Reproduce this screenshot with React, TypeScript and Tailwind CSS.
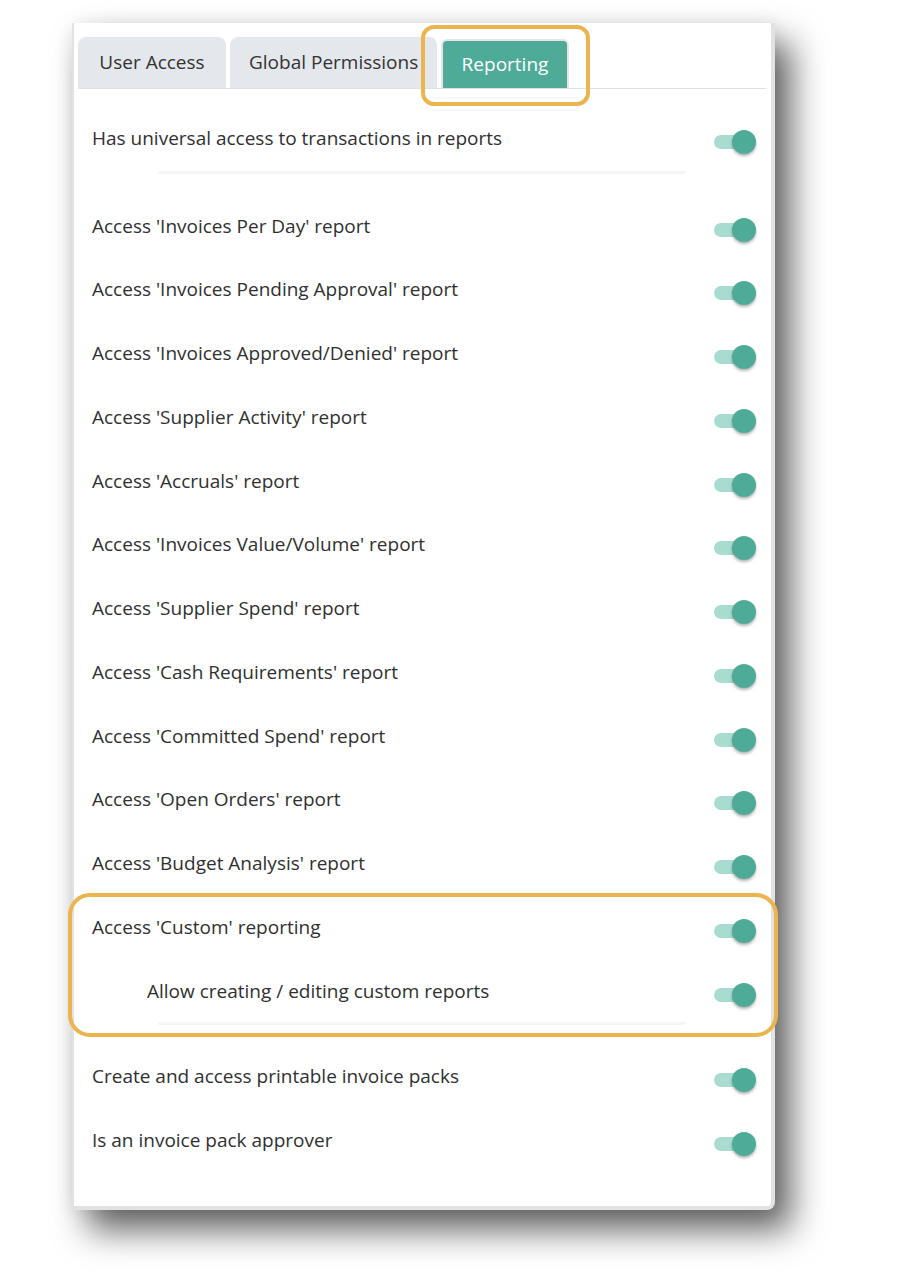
import React from "react";

const FONT = "font-['Open_Sans','Lato',sans-serif]";

type Row = { label: string; indent?: boolean };

const reportRows: Row[] = [
  { label: "Access 'Invoices Per Day' report" },
  { label: "Access 'Invoices Pending Approval' report" },
  { label: "Access 'Invoices Approved/Denied' report" },
  { label: "Access 'Supplier Activity' report" },
  { label: "Access 'Accruals' report" },
  { label: "Access 'Invoices Value/Volume' report" },
  { label: "Access 'Supplier Spend' report" },
  { label: "Access 'Cash Requirements' report" },
  { label: "Access 'Committed Spend' report" },
  { label: "Access 'Open Orders' report" },
  { label: "Access 'Budget Analysis' report" },
  { label: "Access 'Custom' reporting" },
  { label: "Allow creating / editing custom reports", indent: true },
];

const packRows: Row[] = [
  { label: "Create and access printable invoice packs" },
  { label: "Is an invoice pack approver" },
];

function Toggle() {
  return (
    <div className="relative h-[24px] w-[42px] shrink-0">
      <div className="absolute left-0 top-[5px] h-[14px] w-[36px] rounded-full bg-[#a9dcd1]" />
      <div className="absolute right-0 top-0 h-[24px] w-[24px] rounded-full bg-[#4eab98] shadow-[0_2px_3px_rgba(0,0,0,0.3)]" />
    </div>
  );
}

function PermissionRow({ label, indent }: Row) {
  return (
    <div className="flex h-[63.75px] items-center justify-between pl-[14px] pr-[10px]">
      <span className={`pb-[8px] text-[19px] leading-[26px] text-[#303030] ${indent ? "pl-[55px]" : ""}`}>
        {label}
      </span>
      <Toggle />
    </div>
  );
}

function Divider() {
  return <div className="ml-[80px] h-[3px] w-[527px] bg-[#f5f5f5]" />;
}

export default function App() {
  return (
    <div className={`relative h-[1272px] w-[912px] overflow-hidden bg-white ${FONT}`}>
      <div className="pl-[72px] pt-[23px]">
        <div className="h-[1187px] w-[703px] rounded-br-[8px] border-b-[4px] border-l-[2px] border-r-[4px] border-[#e2e2e2] bg-white pl-[4px] pr-[5px] pt-[14px] shadow-[0_0_18px_rgba(0,0,0,0.07),16px_20px_34px_rgba(0,0,0,0.62)]">
          {/* Tabs */}
          <div className="flex items-end gap-[4px] border-b border-[#e0e0e0]">
            <div className="flex h-[51px] w-[148px] items-center justify-center rounded-t-[8px] bg-[#e4e7eb] text-[19px] text-[#333333]">
              User Access
            </div>
            <div className="flex h-[51px] w-[207px] items-center rounded-t-[8px] bg-[#e4e7eb] pl-[19px] text-[19px] text-[#333333]">
              Global Permissions
            </div>
            <div className="flex h-[49px] w-[128px] items-center justify-center rounded-t-[6px] border-x-2 border-t-2 border-[#e6e6e6] bg-[#4eab98] text-[19px] text-white">
              Reporting
            </div>
          </div>

          {/* Universal access */}
          <div className="pt-[21px]">
            <PermissionRow label="Has universal access to transactions in reports" />
            <div className="-mt-[3px] mb-[24px]">
              <Divider />
            </div>
          </div>

          {/* Reports */}
          <div>
            {reportRows.map((r) => (
              <PermissionRow key={r.label} {...r} />
            ))}
            <div className="-mt-[5px] mb-[24px]">
              <Divider />
            </div>
          </div>

          {/* Invoice packs */}
          <div>
            {packRows.map((r) => (
              <PermissionRow key={r.label} {...r} />
            ))}
          </div>
        </div>
      </div>

      {/* Highlight annotations */}
      <div className="pointer-events-none absolute left-[421px] top-[25px] h-[81px] w-[169px] rounded-[13px] border-[4px] border-[#ecb44e]" />
      <div className="pointer-events-none absolute left-[68px] top-[893px] h-[144px] w-[710px] rounded-[22px] border-[4px] border-[#ecb44e]" />
    </div>
  );
}
